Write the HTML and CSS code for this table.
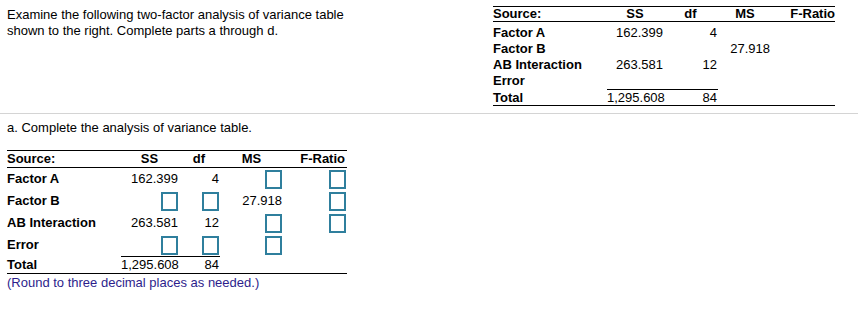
FILE: index.html
```html
<!DOCTYPE html>
<html>
<head>
<meta charset="utf-8">
<link rel="stylesheet" href="styles.css">
</head>
<body>
<div class="top">
  <p class="intro">Examine the following two-factor analysis of variance table<br>shown to the right. Complete parts a through d.</p>
  <table class="anova ref">
    <colgroup><col class="c-src"><col class="c-ss"><col class="c-df"><col class="c-ms"><col class="c-f"></colgroup>
    <thead>
      <tr><th class="src">Source:</th><th class="ctr">SS</th><th class="ctr">df</th><th class="ctr">MS</th><th class="rt">F-Ratio</th></tr>
    </thead>
    <tbody>
      <tr class="first"><td class="src">Factor A</td><td class="ss">162.399</td><td class="df">4</td><td class="ms"></td><td class="f"></td></tr>
      <tr><td class="src">Factor B</td><td class="ss"></td><td class="df"></td><td class="ms">27.918</td><td class="f"></td></tr>
      <tr><td class="src">AB Interaction</td><td class="ss">263.581</td><td class="df">12</td><td class="ms"></td><td class="f"></td></tr>
      <tr><td class="src">Error</td><td class="ss"></td><td class="df"></td><td class="ms"></td><td class="f"></td></tr>
      <tr class="total"><td class="src">Total</td><td class="ss sum">1,295.608</td><td class="df sum">84</td><td class="ms"></td><td class="f"></td></tr>
    </tbody>
  </table>
</div>
<hr class="sep">
<p class="question">a. Complete the analysis of variance table.</p>
<table class="anova ans">
  <colgroup><col class="c-src"><col class="c-ss"><col class="c-df"><col class="c-ms"><col class="c-f"></colgroup>
  <thead>
    <tr><th class="src">Source:</th><th class="ctr">SS</th><th class="ctr">df</th><th class="ctr">MS</th><th class="rt">F-Ratio</th></tr>
  </thead>
  <tbody>
    <tr><td class="src">Factor A</td><td class="ss">162.399</td><td class="df">4</td><td class="ms"><span class="box"></span></td><td class="f"><span class="box"></span></td></tr>
    <tr><td class="src">Factor B</td><td class="ss"><span class="box"></span></td><td class="df"><span class="box"></span></td><td class="ms">27.918</td><td class="f"><span class="box"></span></td></tr>
    <tr><td class="src">AB Interaction</td><td class="ss">263.581</td><td class="df">12</td><td class="ms"><span class="box"></span></td><td class="f"><span class="box"></span></td></tr>
    <tr><td class="src">Error</td><td class="ss"><span class="box"></span></td><td class="df"><span class="box"></span></td><td class="ms"><span class="box"></span></td><td class="f"></td></tr>
    <tr class="total"><td class="src">Total</td><td class="ss sum">1,295.608</td><td class="df sum">84</td><td class="ms"></td><td class="f"></td></tr>
  </tbody>
</table>
<p class="note">(Round to three decimal places as needed.)</p>
</body>
</html>
```

FILE: styles.css
```css
html, body {
  margin: 0;
  padding: 0;
  background: #fff;
}
body {
  font-family: "Liberation Sans", Arial, sans-serif;
  font-size: 13px;
  color: #000;
}
.top {
  display: flex;
  align-items: flex-start;
  padding: 6px 23px 0 7px;
}
.intro {
  margin: 1px 0 0 0;
  line-height: 16px;
}
.anova {
  border-collapse: separate;
  border-spacing: 0;
  table-layout: fixed;
  border-top: 1px solid #000;
  border-bottom: 1px solid #000;
}
.anova th {
  font-weight: bold;
  padding: 0;
  border-bottom: 1px solid #000;
  white-space: nowrap;
}
.anova td {
  padding: 0;
  white-space: nowrap;
}
.anova .src { text-align: left; font-weight: bold; }
.anova .ctr { text-align: center; }
.anova .rt { text-align: right; }
.anova .ss, .anova .df, .anova .ms, .anova .f { text-align: right; }
.anova td.sum { border-top: 1px solid #000; }

/* reference table (top right) */
.ref {
  margin-left: auto;
  width: 342px;
}
.ref .c-src { width: 114px; }
.ref .c-ss { width: 56px; }
.ref .c-df { width: 55px; }
.ref .c-ms { width: 54px; }
.ref .c-f { width: 63px; }
.ref th { height: 14px; line-height: 14px; }
.ref td { line-height: 16px; height: 16px; }
.ref tr.total td { line-height: 15px; height: 15px; }
.ref .df { padding-right: 1px; }
.ref .ms { padding-right: 2px; }
.ref tr.first td { padding-top: 3px; }

.sep {
  border: 0;
  border-top: 1px solid #d4d4d4;
  margin: 7px 0 0 0;
  height: 0;
}
.question {
  margin: 6px 0 0 7px;
  line-height: 16px;
}

/* answer table */
.ans {
  margin: 14px 0 0 7px;
  width: 340px;
}
.ans .c-src { width: 114px; }
.ans .c-ss { width: 57px; }
.ans .c-df { width: 42px; }
.ans .c-ms { width: 63px; }
.ans .c-f { width: 64px; }
.ans th { height: 16px; line-height: 15px; vertical-align: top; }
.ans th.rt { padding-right: 2px; }
.ans td { height: 22px; line-height: 16px; vertical-align: middle; }
.ans .df, .ans .ms, .ans .f { padding-right: 1px; }
.ans tr.total td { height: 16px; }

.box {
  display: inline-block;
  box-sizing: border-box;
  width: 17px;
  height: 19px;
  border: 2px solid #2f7f9d;
  background: #fff;
  vertical-align: middle;
}

.note {
  margin: 1px 0 0 7px;
  line-height: 16px;
  color: #2d1e8c;
}
```
